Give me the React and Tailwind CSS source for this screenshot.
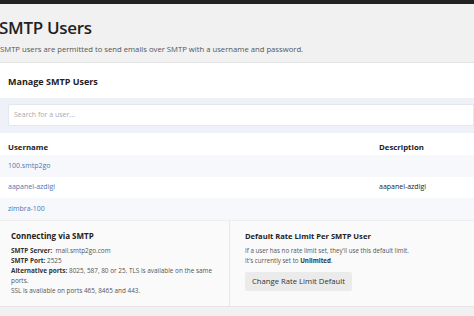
const USERS = [
  { name: '100.smtp2go', desc: '' },
  { name: 'aapanel-azdigi', desc: 'aapanel-azdigi' },
  { name: 'zimbra-100', desc: '' },
];

export default function App() {
  return (
    <div className="w-[474px] h-[316px] overflow-hidden bg-[#f1f1f1] font-['Open_Sans',sans-serif] text-[#333]">
      <div className="h-[4px] bg-[#222]" />
      <div className="pt-[12px] h-[59px] border-b border-[#e3e3e3]">
        <h1 className="text-[17px] leading-[24px] font-semibold text-[#222] -ml-[1px] tracking-[-0.3px]">SMTP Users</h1>
        <p className="text-[7.7px] leading-[10px] text-[#555] mt-[4px]">
          SMTP users are permitted to send emails over SMTP with a username and password.
        </p>
      </div>

      <div className="bg-white border-b border-[#e5e5e5]">
        <div className="h-[35px] flex items-center pt-[2px] px-[8px]">
          <h2 className="text-[9px] font-bold text-[#222]">Manage SMTP Users</h2>
        </div>
        <div className="bg-[#eef2f8] pt-[6px] pb-[7px] pl-[8px]">
          <div className="h-[22px] bg-white border border-[#e4e8ee] rounded-l-[2px] flex items-center px-[5px] text-[7px] text-[#aaa]">
            Search for a user...
          </div>
        </div>
        <div className="flex h-[22px] items-end pb-[1px] px-[8px] text-[7.8px] font-bold text-[#222]">
          <span className="flex-1">Username</span>
          <span className="w-[87px]">Description</span>
        </div>
        {USERS.map((u, i) => (
          <div
            key={u.name}
            className={`flex h-[21.5px] items-center px-[8px] text-[7px] ${i % 2 === 0 ? 'bg-[#f6f8fb]' : 'bg-white'}`}
          >
            <span className="flex-1 text-[#4a78b3]">{u.name}</span>
            <span className="w-[87px] text-[#222]">{u.desc}</span>
          </div>
        ))}
        <div className="flex bg-[#fafafa] h-[86px] border-t border-[#eee]">
          <div className="w-[230px] border-r border-[#e8e8e8] pl-[11px] pr-[2px] pt-[8px]">
            <h3 className="text-[8px] font-bold text-[#222] leading-[14px]">Connecting via SMTP</h3>
            <div className="mt-[3px] text-[6.4px] leading-[10px] text-[#555]">
              <p><b className="text-[#333]">SMTP Server:</b>&nbsp; mail.smtp2go.com</p>
              <p><b className="text-[#333]">SMTP Port:</b> 2525</p>
              <p>
                <b className="text-[#333]">Alternative ports:</b> 8025, 587, 80 or 25. TLS is available on the same ports.
              </p>
              <p>SSL is available on ports 465, 8465 and 443.</p>
            </div>
          </div>
          <div className="flex-1 pl-[15px] pt-[8px]">
            <h3 className="text-[7.6px] font-bold text-[#222] leading-[14px]">Default Rate Limit Per SMTP User</h3>
            <div className="mt-[3px] text-[6.2px] leading-[10px] text-[#555]">
              <p>If a user has no rate limit set, they'll use this default limit.</p>
              <p>It's currently set to <b className="text-[#333]">Unlimited</b>.</p>
            </div>
            <button className="mt-[4px] h-[19px] px-[7px] bg-[#ebebeb] rounded-[2px] text-[7.7px] text-[#333]">
              Change Rate Limit Default
            </button>
          </div>
        </div>
      </div>
    </div>
  );
}
